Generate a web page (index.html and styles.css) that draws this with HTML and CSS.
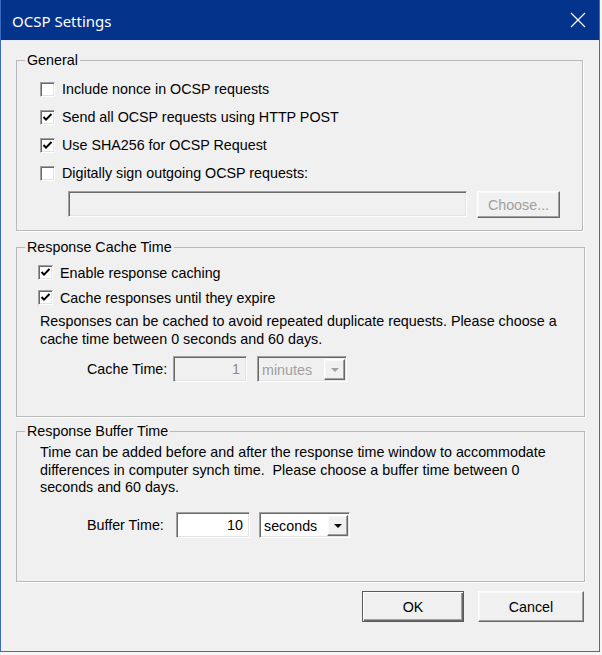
FILE: index.html
```html
<!DOCTYPE html>
<html>
<head>
<meta charset="utf-8">
<title>OCSP Settings</title>
<link rel="stylesheet" href="styles.css">
</head>
<body>
<div class="window">
  <div class="titlebar">
    <span class="title">OCSP Settings</span>
    <svg class="close" width="16" height="16" viewBox="0 0 16 16"><path d="M1 1 L15 15 M15 1 L1 15" stroke="#fff" stroke-width="1.2" fill="none"/></svg>
  </div>
  <div class="client">
    <fieldset class="group g-general">
      <legend>General</legend>
      <div class="body body-general">
        <label class="check row28"><span class="box"></span><span>Include nonce in OCSP requests</span></label>
        <label class="check row28"><span class="box"><svg width="13" height="13" viewBox="0 0 13 13"><path d="M2.5 6 L5 8.6 L10.5 3" stroke="#000" stroke-width="2" fill="none"/></svg></span><span>Send all OCSP requests using HTTP POST</span></label>
        <label class="check row28"><span class="box"><svg width="13" height="13" viewBox="0 0 13 13"><path d="M2.5 6 L5 8.6 L10.5 3" stroke="#000" stroke-width="2" fill="none"/></svg></span><span>Use SHA256 for OCSP Request</span></label>
        <label class="check row28"><span class="box"></span><span>Digitally sign outgoing OCSP requests:</span></label>
        <div class="file-row">
          <div class="field disabled file-field"></div>
          <button class="btn choose" disabled>Choose...</button>
        </div>
      </div>
    </fieldset>

    <fieldset class="group g-cache">
      <legend>Response Cache Time</legend>
      <div class="body body-cache">
        <label class="check row25"><span class="box"><svg width="13" height="13" viewBox="0 0 13 13"><path d="M2.5 6 L5 8.6 L10.5 3" stroke="#000" stroke-width="2" fill="none"/></svg></span><span>Enable response caching</span></label>
        <label class="check row25"><span class="box"><svg width="13" height="13" viewBox="0 0 13 13"><path d="M2.5 6 L5 8.6 L10.5 3" stroke="#000" stroke-width="2" fill="none"/></svg></span><span>Cache responses until they expire</span></label>
        <p class="note note-cache">Responses can be cached to avoid repeated duplicate requests. Please choose a<br>cache time between 0 seconds and 60 days.</p>
        <div class="time-row time-cache">
          <span class="time-label label-cache">Cache Time:</span>
          <div class="field disabled num">1</div>
          <div class="combo disabled combo-cache">
            <span class="combo-text">minutes</span>
            <span class="combo-btn"><span class="arrow"></span></span>
          </div>
        </div>
      </div>
    </fieldset>

    <fieldset class="group g-buffer">
      <legend>Response Buffer Time</legend>
      <div class="body body-buffer">
        <p class="note note-buffer">Time can be added before and after the response time window to accommodate<br>differences in computer synch time.&nbsp; Please choose a buffer time between 0<br>seconds and 60 days.</p>
        <div class="time-row time-buffer">
          <span class="time-label label-buffer">Buffer Time:</span>
          <div class="field num">10</div>
          <div class="combo combo-buffer">
            <span class="combo-text">seconds</span>
            <span class="combo-btn"><span class="arrow"></span></span>
          </div>
        </div>
      </div>
    </fieldset>

    <div class="buttons">
      <button class="btn default ok">OK</button>
      <button class="btn cancel">Cancel</button>
    </div>
  </div>
</div>
</body>
</html>
```

FILE: styles.css
```css
* { box-sizing: border-box; }
html, body { margin: 0; padding: 0; }
body {
  width: 602px;
  height: 655px;
  overflow: hidden;
  background: #f6f6f6;
  font-family: "Liberation Sans", Arial, sans-serif;
  font-size: 14.3px;
  color: #000;
}
.window {
  width: 600px;
  height: 652px;
  border: 1px solid #3b6cc0;
  border-top: 0;
  background: #f0f0f0;
  display: flex;
  flex-direction: column;
}
.titlebar {
  height: 41px;
  flex: none;
  background: #04338c;
  color: #fff;
  display: flex;
  align-items: center;
  justify-content: space-between;
  padding: 0 13px 0 11px;
  border-bottom: 1px solid #e8ecf4;
}
.title {
  font-family: "Noto Sans", "Open Sans", sans-serif;
  font-size: 15px;
  margin-top: 1px;
}
.close { display: block; margin-top: -1px; }

.client {
  flex: 1;
  display: flex;
  flex-direction: column;
  padding: 11px 14px 0 15px;
}

.group {
  margin: 0;
  padding: 0;
  min-width: 0;
  border: 1px solid #b9b9b9;
  box-shadow: 1px 1px 0 #fff;
}
.group legend {
  margin-left: 8px;
  padding: 0 2px;
  line-height: 16px;
  font-size: 14.3px;
}
.g-general { margin-right: 2px; }
.g-cache { margin-top: 8px; }
.g-buffer { margin-top: 6px; }

.body-general { padding: 7px 0 12px 23px; }
.body-cache { padding: 5px 0 34px 21px; }
.body-buffer { padding: 5px 0 43px 23px; }

.check {
  display: flex;
  align-items: center;
}
.row28 { height: 28px; }
.row25 { height: 25px; }
.box {
  width: 15px;
  height: 15px;
  flex: none;
  margin-right: 7px;
  background: #fff;
  border: 1px solid;
  border-color: #a0a0a0 #fff #fff #a0a0a0;
  box-shadow: inset 1px 1px 0 #696969, inset -1px -1px 0 #e3e3e3;
  display: flex;
  align-items: center;
  justify-content: center;
}
.box svg { display: block; }

.field {
  height: 26px;
  background: #fff;
  border: 1px solid;
  border-color: #a0a0a0 #fff #fff #a0a0a0;
  box-shadow: inset 1px 1px 0 #696969, inset -1px -1px 0 #e3e3e3;
}
.field.disabled { background: #f0f0f0; color: #8a8a8a; }

.file-row {
  display: flex;
  align-items: flex-start;
  margin-top: 4px;
  margin-left: 28px;
  gap: 10px;
}
.file-field { width: 399px; }

.btn {
  font-family: "Liberation Sans", Arial, sans-serif;
  font-size: 14.3px;
  color: #000;
  background: #f0f0f0;
  padding: 0;
  margin: 0;
  border: 1px solid;
  border-color: #fff #696969 #696969 #fff;
  box-shadow: inset -1px -1px 0 #a0a0a0, inset 1px 1px 0 #f8f8f8;
}
.choose {
  width: 83px;
  height: 27px;
  color: #a0a0a0;
}

.note {
  margin: 0;
  line-height: 18px;
}
.note-cache { margin: 2px 0 0 2px; }
.note-buffer { line-height: 17.5px; }

.time-row {
  display: flex;
  align-items: center;
  height: 26px;
}
.time-cache { margin-top: 8px; margin-left: 49px; }
.time-buffer { margin-top: 15.5px; margin-left: 47px; }
.time-label { flex: none; }
.label-cache { width: 86px; }
.label-buffer { width: 89px; }
.num {
  width: 74px;
  text-align: right;
  padding-right: 6px;
  line-height: 24px;
}
.combo {
  height: 26px;
  display: flex;
  padding: 1px;
  background: #fff;
  border: 1px solid;
  border-color: #a0a0a0 #fff #fff #a0a0a0;
  box-shadow: inset 1px 1px 0 #696969, inset -1px -1px 0 #e3e3e3;
}
.combo.disabled { background: #f0f0f0; color: #a0a0a0; }
.combo-cache { width: 90px; margin-left: 10px; }
.combo-buffer { width: 91px; margin-left: 9px; }
.combo-text {
  flex: 1;
  padding-left: 3px;
  line-height: 22px;
  margin-top: 1px;
}
.combo-btn {
  width: 21px;
  height: 21px;
  margin-top: 1px;
  background: #f0f0f0;
  border: 1px solid;
  border-color: #fff #696969 #696969 #fff;
  box-shadow: inset -1px -1px 0 #a0a0a0, inset 1px 1px 0 #f8f8f8;
  display: flex;
  align-items: center;
  justify-content: center;
}
.arrow {
  width: 0;
  height: 0;
  border-left: 4px solid transparent;
  border-right: 4px solid transparent;
  border-top: 4px solid #000;
}
.combo.disabled .arrow { border-top-color: #a0a0a0; }

.buttons {
  display: flex;
  justify-content: flex-end;
  gap: 14px;
  margin-top: 9px;
  padding-right: 1px;
}
.ok, .cancel { height: 31px; }
.ok { width: 102px; }
.cancel { width: 106px; }
.btn.default {
  border: 1px solid #5a5a5a;
  box-shadow: inset 1px 1px 0 #fff, inset -1px -1px 0 #696969, inset -2px -2px 0 #a0a0a0;
}
```
